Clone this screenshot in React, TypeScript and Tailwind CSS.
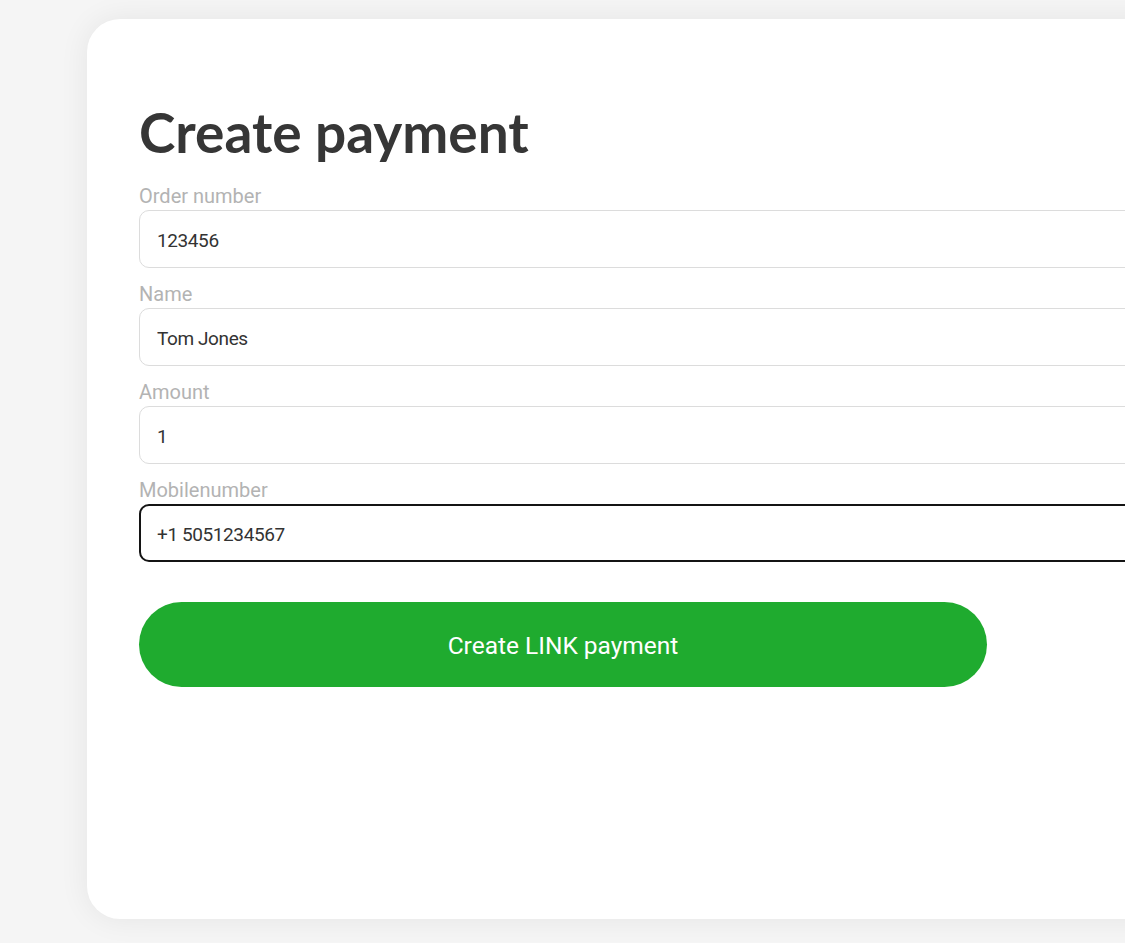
const fields = [
  { label: 'Order number', value: '123456' },
  { label: 'Name', value: 'Tom Jones' },
  { label: 'Amount', value: '1' },
  { label: 'Mobilenumber', value: '+1 5051234567', active: true },
];

function Field({ label, value, active }: { label: string; value: string; active?: boolean }) {
  return (
    <div className="flex flex-col">
      <label className="mb-[2px] text-[20px] leading-[24px] text-[#b3b3b3]">{label}</label>
      <input
        readOnly
        value={value}
        className={
          active
            ? 'h-[58px] w-full rounded-[10px] border-2 border-[#141414] bg-white pl-[16px] pt-[3px] text-[19px] tracking-[-0.4px] text-[#333] outline-none'
            : 'h-[58px] w-full rounded-[10px] border border-[#dcdcdc] bg-white pl-[17px] pt-[3px] text-[19px] tracking-[-0.4px] text-[#333] outline-none'
        }
      />
    </div>
  );
}

export default function App() {
  return (
    <div
      className="h-[943px] w-[1125px] overflow-hidden bg-[#f5f5f5] pl-[87px] pt-[19px]"
      style={{ fontFamily: 'Roboto, "Liberation Sans", sans-serif' }}
    >
      <div className="h-[900px] w-[1200px] rounded-[33px] bg-white pl-[52px] pr-[52px] pt-[86px] shadow-[0_0_30px_rgba(0,0,0,0.07)]">
        <h1
          className="text-[55px] font-bold leading-none text-[#363636]"
          style={{ fontFamily: 'Lato, "Noto Sans", sans-serif' }}
        >
          Create payment
        </h1>
        <div className="mt-[24px] flex flex-col gap-[14px]">
          {fields.map((f) => (
            <Field key={f.label} {...f} />
          ))}
        </div>
        <button className="mt-[40px] h-[85px] w-[848px] rounded-full bg-[#1fab2f] pt-[4px] text-[24.5px] text-white">
          Create LINK payment
        </button>
      </div>
    </div>
  );
}
